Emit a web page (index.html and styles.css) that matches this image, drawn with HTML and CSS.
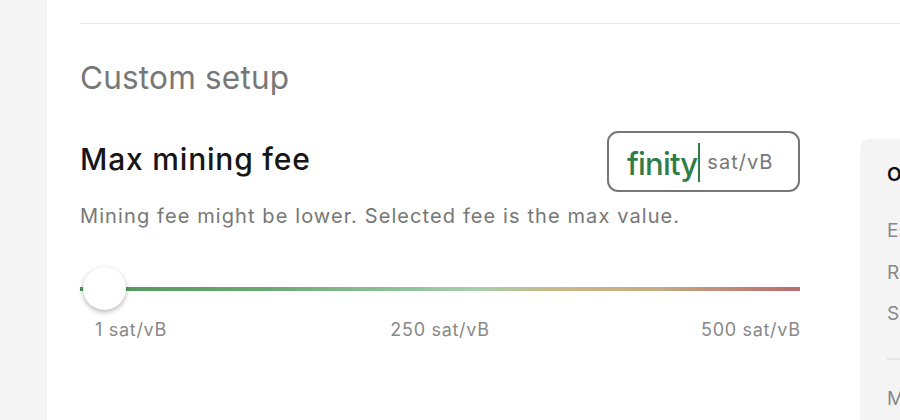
FILE: index.html
```html
<!DOCTYPE html>
<html>
<head>
<meta charset="utf-8">
<link rel="stylesheet" href="styles.css">
</head>
<body>
<div class="sidebar"></div>
<div class="main">
  <div class="divider"></div>
  <div class="row">
    <div class="content">
      <h2 class="section-title">Custom setup</h2>
      <div class="fee-head">
        <h3 class="fee-title">Max mining fee</h3>
        <div class="fee-input">
          <span class="fee-value">finity</span><span class="caret"></span><span class="fee-unit">sat/vB</span>
        </div>
      </div>
      <p class="fee-hint">Mining fee might be lower. Selected fee is the max value.</p>
      <div class="slider">
        <div class="track"></div>
        <div class="thumb"></div>
      </div>
      <div class="scale">
        <span class="scale-min">1 sat/vB</span>
        <span class="scale-mid">250 sat/vB</span>
        <span class="scale-max">500 sat/vB</span>
      </div>
    </div>
    <aside class="panel">
      <div class="panel-title">Overview</div>
      <div class="panel-item first">Estimated</div>
      <div class="panel-item">Rate</div>
      <div class="panel-item">Size</div>
      <div class="panel-divider"></div>
      <div class="panel-item after-divider">Max</div>
    </aside>
  </div>
</div>
</body>
</html>
```
FILE: styles.css
```css
html, body {
  margin: 0;
  padding: 0;
  height: 420px;
  overflow: hidden;
  background: #fff;
  font-family: Inter, "Noto Sans", sans-serif;
}
body {
  display: flex;
}
.sidebar {
  width: 47px;
  flex: none;
  background: #f4f4f4;
}
.main {
  flex: 1;
  padding-left: 33px;
  min-width: 0;
}
.divider {
  margin-top: 23px;
  height: 1px;
  background: #e8e8e8;
}
.row {
  display: flex;
  align-items: flex-start;
}
.content {
  width: 720px;
  flex: none;
}
.section-title {
  margin: 34px 0 0;
  font-size: 31.5px;
  line-height: 40px;
  font-weight: 400;
  color: #777;
  letter-spacing: 0.2px;
}
.fee-head {
  display: flex;
  justify-content: space-between;
  align-items: flex-start;
  margin-top: 33px;
}
.fee-title {
  margin: 10px 0 0;
  font-size: 30px;
  line-height: 36px;
  font-weight: 500;
  color: #161616;
  letter-spacing: 0.8px;
}
.fee-input {
  box-sizing: border-box;
  width: 193px;
  height: 61px;
  border: 2px solid #777;
  border-radius: 11px;
  display: flex;
  align-items: center;
  padding-left: 18px;
}
.fee-value {
  font-size: 31px;
  line-height: 36px;
  color: #2f7d47;
  font-weight: 500;
  letter-spacing: -0.8px;
  margin-top: 4px;
}
.caret {
  width: 2px;
  height: 39px;
  background: #2f7d47;
  margin: 2px 7px 0 1px;
}
.fee-unit {
  font-size: 20px;
  line-height: 24px;
  color: #777;
  letter-spacing: 1px;
}
.fee-hint {
  margin: 11px 0 0;
  font-size: 20px;
  line-height: 26px;
  color: #777;
  letter-spacing: 1.1px;
}
.slider {
  position: relative;
  margin-top: 58px;
  height: 4px;
}
.track {
  height: 4px;
  background: linear-gradient(90deg, #4d955a 0%, #6aa872 25%, #a4d0ac 55%, #c9b986 66%, #c6ab83 80%, #b96b6c 100%);
}
.thumb {
  position: absolute;
  left: 3px;
  top: -20px;
  width: 43px;
  height: 43px;
  border-radius: 50%;
  background: #fff;
  box-shadow: 0 2px 5px rgba(0,0,0,0.3);
}
.scale {
  display: grid;
  grid-template-columns: 1fr 1fr 1fr;
  margin-top: 28px;
  font-size: 18px;
  line-height: 22px;
  color: #888;
  letter-spacing: 0.7px;
}
.scale-min {
  padding-left: 15px;
}
.scale-mid {
  text-align: center;
}
.scale-max {
  text-align: right;
  margin-right: -0.7px;
}
.panel {
  margin-left: 60px;
  margin-top: 115px;
  flex: 1;
  background: #f4f4f4;
  border-radius: 10px 0 0 0;
  padding: 24px 0 0 27px;
  height: 300px;
  white-space: nowrap;
  overflow: hidden;
}
.panel-title {
  font-size: 19px;
  line-height: 24px;
  font-weight: 600;
  color: #111;
}
.panel-item {
  font-size: 19px;
  line-height: 24px;
  color: #888;
  margin-top: 17.5px;
}
.panel-item.first {
  margin-top: 32px;
}
.panel-divider {
  height: 2px;
  background: #e4e4e4;
  margin: 32px 0 0;
}
.panel-item.after-divider {
  margin-top: 27px;
}
```
